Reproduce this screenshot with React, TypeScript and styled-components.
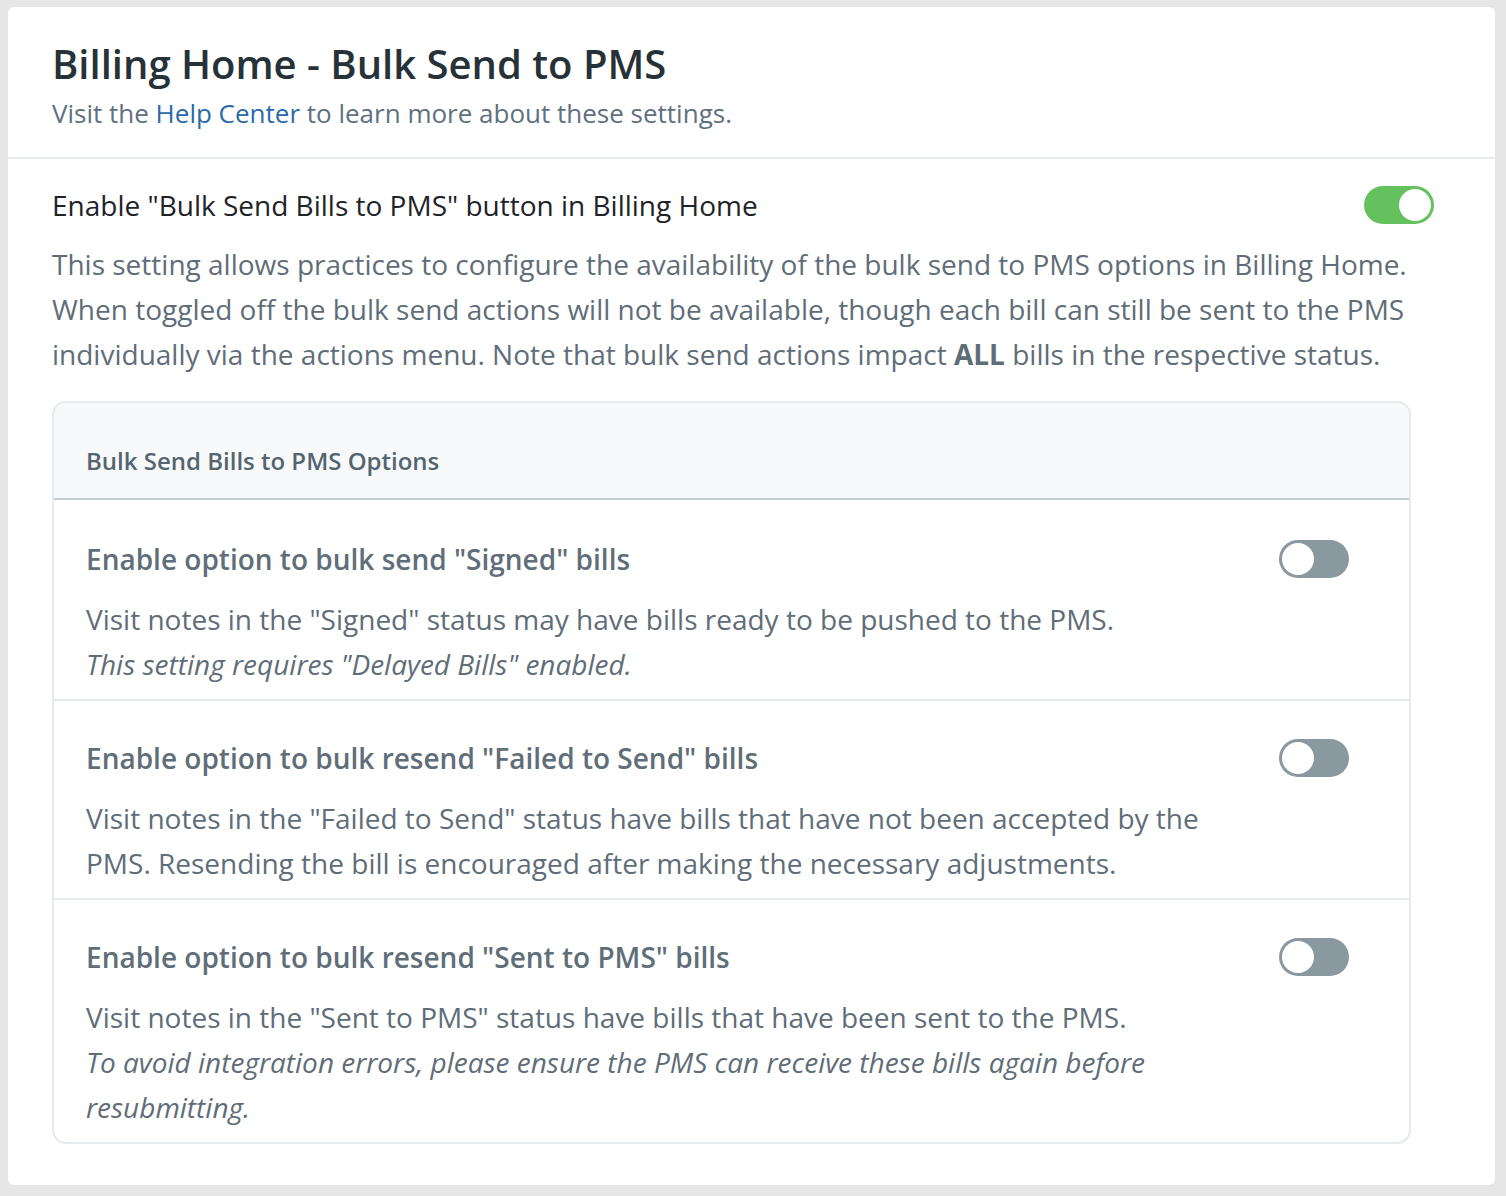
import React from 'react';
import styled, { createGlobalStyle } from 'styled-components';

const GlobalStyle = createGlobalStyle`
  html, body {
    margin: 0;
    padding: 0;
    background: #e6e6e6;
  }
  body {
    font-family: "Open Sans", "Noto Sans", sans-serif;
  }
`;

const Page = styled.div`
  padding: 7px 11px 13px 8px;
`;

const Card = styled.div`
  background: #ffffff;
  border-radius: 6px;
  overflow: hidden;
`;

const CardHeader = styled.div`
  padding: 33px 44px 25px;
  border-bottom: 2px solid #e6eaed;
`;

const Title = styled.h1`
  margin: 0;
  font-size: 40px;
  line-height: 48px;
  font-weight: 600;
  color: #263238;
`;

const Subtitle = styled.p`
  margin: 6px 0 0;
  font-size: 26px;
  line-height: 38px;
  color: #607080;
`;

const HelpLink = styled.a`
  color: #2a6aa8;
  text-decoration: none;
`;

const CardBody = styled.div`
  padding: 25px 61px 41px 44px;
`;

const SettingRow = styled.div`
  display: flex;
  align-items: center;
  justify-content: space-between;
  gap: 20px;
`;

const SettingLabel = styled.div`
  font-size: 28px;
  line-height: 42px;
  color: #1e2328;
`;

const Description = styled.p`
  margin: 16px 0 0;
  font-size: 28px;
  line-height: 45px;
  color: #5f6d78;
`;

const Strong = styled.strong`
  font-weight: 700;
`;

const Toggle = styled.div<{ $on?: boolean }>`
  position: relative;
  flex: none;
  width: 70px;
  height: 38px;
  border-radius: 19px;
  background: ${p => (p.$on ? '#65c15d' : '#8a989f')};

  &::after {
    content: '';
    position: absolute;
    top: 3px;
    left: ${p => (p.$on ? '35px' : '3px')};
    width: 32px;
    height: 32px;
    border-radius: 50%;
    background: #ffffff;
  }
`;

const OptionsBox = styled.div`
  margin: 24px 23px 0 0;
  border: 2px solid #e6eaed;
  border-radius: 14px;
  overflow: hidden;
`;

const OptionsHeader = styled.div`
  padding: 41px 32px 20px;
  background: #f8f9fb;
  border-bottom: 2px solid #c3ccd2;
  font-size: 24px;
  line-height: 34px;
  font-weight: 600;
  color: #546570;
`;

const OptionRow = styled.div`
  display: flex;
  align-items: flex-start;
  gap: 22px;
  padding: 33px 60px 12px 32px;

  ${OptionsHeader} + & {
    padding-top: 35px;
  }

  & + & {
    border-top: 2px solid #e6eaed;
  }
`;

const OptionText = styled.div`
  flex: 1;
`;

const OptionTitle = styled.div`
  font-size: 28px;
  line-height: 48px;
  font-weight: 600;
  color: #5f6e78;
`;

const OptionDesc = styled.p`
  margin: 14px 0 0;
  font-size: 28px;
  line-height: 45px;
  color: #5f6d78;
`;

const Note = styled.em`
  display: block;
  font-style: italic;
`;

const ToggleSlot = styled.div`
  padding-top: 5px;
`;

type Option = { title: string; desc: string; note?: string };

const options: Option[] = [
  {
    title: 'Enable option to bulk send "Signed" bills',
    desc: 'Visit notes in the "Signed" status may have bills ready to be pushed to the PMS.',
    note: 'This setting requires "Delayed Bills" enabled.',
  },
  {
    title: 'Enable option to bulk resend "Failed to Send" bills',
    desc: 'Visit notes in the "Failed to Send" status have bills that have not been accepted by the PMS. Resending the bill is encouraged after making the necessary adjustments.',
  },
  {
    title: 'Enable option to bulk resend "Sent to PMS" bills',
    desc: 'Visit notes in the "Sent to PMS" status have bills that have been sent to the PMS.',
    note: 'To avoid integration errors, please ensure the PMS can receive these bills again before resubmitting.',
  },
];

const App = () => {
  return (
    <>
      <GlobalStyle />
      <Page>
        <Card>
          <CardHeader>
            <Title>Billing Home - Bulk Send to PMS</Title>
            <Subtitle>
              Visit the <HelpLink href="#">Help Center</HelpLink> to learn more about these settings.
            </Subtitle>
          </CardHeader>
          <CardBody>
            <SettingRow>
              <SettingLabel>Enable "Bulk Send Bills to PMS" button in Billing Home</SettingLabel>
              <Toggle $on />
            </SettingRow>
            <Description>
              This setting allows practices to configure the availability of the bulk send to PMS options in
              Billing Home. When toggled off the bulk send actions will not be available, though each bill can
              still be sent to the PMS individually via the actions menu. Note that bulk send actions impact{' '}
              <Strong>ALL</Strong> bills in the respective status.
            </Description>
            <OptionsBox>
              <OptionsHeader>Bulk Send Bills to PMS Options</OptionsHeader>
              {options.map(o => (
                <OptionRow key={o.title}>
                  <OptionText>
                    <OptionTitle>{o.title}</OptionTitle>
                    <OptionDesc>
                      {o.desc}
                      {o.note && <Note>{o.note}</Note>}
                    </OptionDesc>
                  </OptionText>
                  <ToggleSlot>
                    <Toggle />
                  </ToggleSlot>
                </OptionRow>
              ))}
            </OptionsBox>
          </CardBody>
        </Card>
      </Page>
    </>
  );
};

export default App;
